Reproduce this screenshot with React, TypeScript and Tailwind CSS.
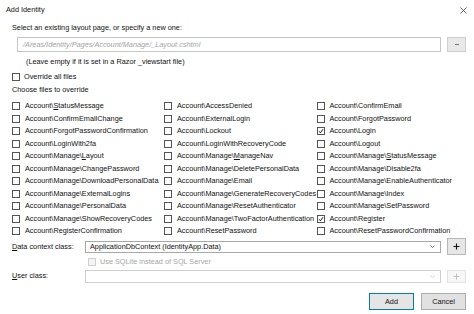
import React from "react";

type Item = { label: string; checked?: boolean };

// "&" marks the mnemonic letter, like a WinForms label
const files: Item[] = [
  { label: "Account\\&StatusMessage" },
  { label: "Account\\AccessDenied" },
  { label: "Account\\ConfirmEmail" },
  { label: "Account\\ConfirmEmailChange" },
  { label: "Account\\ExternalLogin" },
  { label: "Account\\ForgotPassword" },
  { label: "Account\\ForgotPasswordConfirmation" },
  { label: "Account\\Lockout" },
  { label: "Account\\Login", checked: true },
  { label: "Account\\LoginWith2fa" },
  { label: "Account\\LoginWithRecoveryCode" },
  { label: "Account\\Logout" },
  { label: "Account\\Manage\\&Layout" },
  { label: "Account\\Manage\\&ManageNav" },
  { label: "Account\\Manage\\&StatusMessage" },
  { label: "Account\\Manage\\ChangePassword" },
  { label: "Account\\Manage\\DeletePersonalData" },
  { label: "Account\\Manage\\Disable2fa" },
  { label: "Account\\Manage\\DownloadPersonalData" },
  { label: "Account\\Manage\\Email" },
  { label: "Account\\Manage\\EnableAuthenticator" },
  { label: "Account\\Manage\\ExternalLogins" },
  { label: "Account\\Manage\\GenerateRecoveryCodes" },
  { label: "Account\\Manage\\Index" },
  { label: "Account\\Manage\\PersonalData" },
  { label: "Account\\Manage\\ResetAuthenticator" },
  { label: "Account\\Manage\\SetPassword" },
  { label: "Account\\Manage\\ShowRecoveryCodes" },
  { label: "Account\\Manage\\TwoFactorAuthentication" },
  { label: "Account\\Register", checked: true },
  { label: "Account\\RegisterConfirmation" },
  { label: "Account\\ResetPassword" },
  { label: "Account\\ResetPasswordConfirmation" },
];

function Mnemonic({ text }: { text: string }) {
  const i = text.indexOf("&");
  if (i < 0) return <>{text}</>;
  return (
    <>
      {text.slice(0, i)}
      <span className="underline underline-offset-1">{text[i + 1]}</span>
      {text.slice(i + 2)}
    </>
  );
}

function CheckBox({ checked, disabled }: { checked?: boolean; disabled?: boolean }) {
  return (
    <span
      className={
        disabled
          ? "flex shrink-0 w-[8px] h-[8px] border border-[#cfcfcf] bg-[#f4f4f4]"
          : "flex shrink-0 w-[8px] h-[8px] border border-[#555555] bg-white items-center justify-center"
      }
    >
      {checked && (
        <svg width="6" height="6" viewBox="0 0 6 6">
          <polyline points="1,3.2 2.4,4.8 5,1.2" fill="none" stroke="#1a1a1a" strokeWidth="1" />
        </svg>
      )}
    </span>
  );
}

function Chevron({ color }: { color: string }) {
  return (
    <svg width="5" height="3" viewBox="0 0 5 3">
      <polyline points="0.5,0.5 2.5,2.5 4.5,0.5" fill="none" stroke={color} strokeWidth="0.8" />
    </svg>
  );
}

export default function App() {
  return (
    <div className="w-[474px] h-[314px] bg-white overflow-hidden text-[7.3px] leading-[10px] text-[#111111] font-['Liberation_Sans','Arial',sans-serif]">
      <div className="flex justify-between items-center h-[20px] pl-[6px] pr-[7px]">
        <span>Add Identity</span>
        <svg width="7" height="7" viewBox="0 0 7 7">
          <path d="M0.5 0.5 L6.5 6.5 M6.5 0.5 L0.5 6.5" stroke="#333333" strokeWidth="0.8" />
        </svg>
      </div>

      <div className="flex flex-col pl-[12px] pr-[8px]">
        <div className="mt-[3px] h-[10px]">Select an existing layout page, or specify a new one:</div>

        <div className="flex mt-[4px] h-[15px]">
          <div className="ml-[5px] w-[424px] h-full border border-[#c6c6c6] flex items-center pl-[5px] italic text-[#a3a3a3]">
            /Areas/Identity/Pages/Account/Manage/_Layout.cshtml
          </div>
          <div className="ml-[6px] w-[19px] h-full border border-[#d0d0d0] bg-[#e8e8e8] flex items-center justify-center">
            <span className="w-[4px] h-px bg-[#777777]" />
          </div>
        </div>

        <div className="mt-[5px] h-[10px] pl-[14px]">(Leave empty if it is set in a Razor _viewstart file)</div>

        <div className="mt-[5px] h-[10px] flex items-center gap-[4px]">
          <CheckBox />
          <span>Override all files</span>
        </div>

        <div className="mt-[3px] h-[10px]">Choose files to override</div>

        <div className="mt-[4.75px] grid grid-cols-[152px_152.5px_1fr] auto-rows-[12.5px]">
          {files.map((f) => (
            <div key={f.label} className="flex items-center gap-[5px] min-w-0">
              <CheckBox checked={f.checked} />
              <span className="whitespace-nowrap">
                <Mnemonic text={f.label} />
              </span>
            </div>
          ))}
        </div>

        <div className="mt-[0.75px] flex items-center h-[17px]">
          <span className="w-[73px]">
            <Mnemonic text="&Data context class:" />
          </span>
          <div className="w-[356px] h-[12px] border border-[#a8a8a8] flex items-center justify-between pl-[4px] pr-[5px]">
            <span>ApplicationDbContext (IdentityApp.Data)</span>
            <Chevron color="#606060" />
          </div>
          <div className="ml-[6px] w-[19px] h-[17px] border border-[#b8b8b8] bg-[#e6e6e6] flex items-center justify-center">
            <svg width="7" height="7" viewBox="0 0 7 7">
              <path d="M3.5 0.5 V6.5 M0.5 3.5 H6.5" stroke="#111111" strokeWidth="1.1" />
            </svg>
          </div>
        </div>

        <div className="mt-[2px] h-[10px] flex items-center gap-[4px] pl-[76px] text-[#a6a6a6]">
          <CheckBox disabled />
          <span>Use SQLite instead of SQL Server</span>
        </div>

        <div className="mt-[2.5px] flex items-center h-[13px]">
          <span className="w-[73px]">
            <Mnemonic text="&User class:" />
          </span>
          <div className="w-[356px] h-[13px] border border-[#cfcfcf] flex items-center justify-end pr-[5px]">
            <Chevron color="#c4c4c4" />
          </div>
          <div className="ml-[6px] w-[19px] h-[13px] border border-[#e2e2e2] bg-[#f7f7f7] flex items-center justify-center">
            <svg width="7" height="7" viewBox="0 0 7 7">
              <path d="M3.5 0.5 V6.5 M0.5 3.5 H6.5" stroke="#c2c2c2" strokeWidth="1" />
            </svg>
          </div>
        </div>

        <div className="mt-[10.5px] flex justify-end gap-[7px]">
          <button className="w-[45px] h-[17px] border border-[#0078d7] bg-[#e5e5e5] leading-none">Add</button>
          <button className="w-[45px] h-[17px] border border-[#adadad] bg-[#e1e1e1] leading-none">Cancel</button>
        </div>
      </div>
    </div>
  );
}
